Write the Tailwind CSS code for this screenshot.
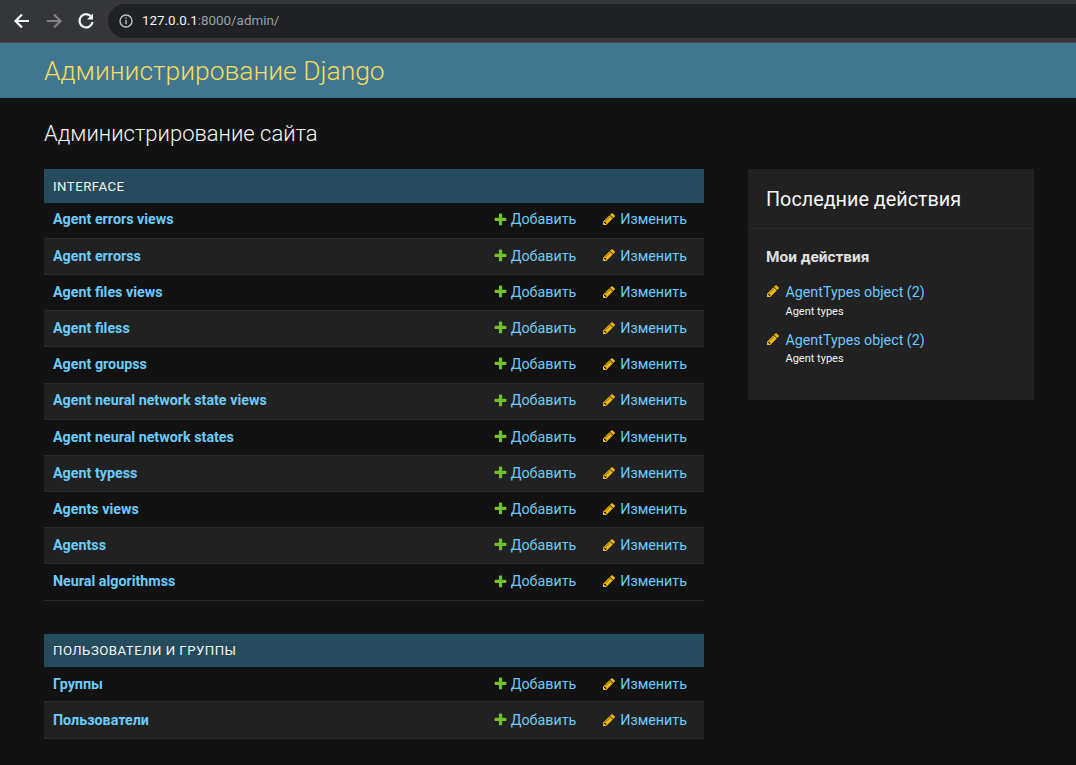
<!DOCTYPE html>
<html lang="ru">

<head>
    <meta charset="UTF-8">
    <script src="https://cdn.jsdelivr.net/npm/@tailwindcss/browser@4"></script>
    <title>Администрирование сайта</title>
</head>

<body class="bg-[#121212] font-['Roboto',sans-serif] w-[1076px] h-[765px] overflow-hidden">
    <!-- browser bar -->
    <div class="h-[43px] bg-[#35363a] flex items-center pl-[13px] border-b border-[#4a4b4f]">
        <svg class="w-[18px] h-[18px] mr-[14px]" viewBox="0 0 18 18" fill="none" stroke="#f1f3f4" stroke-width="2.2"><path d="M16 9H3M9 2.5 2.5 9 9 15.5" /></svg>
        <svg class="w-[18px] h-[18px] mr-[14px]" viewBox="0 0 18 18" fill="none" stroke="#808184" stroke-width="2.2"><path d="M2 9h13M9 2.5 15.5 9 9 15.5" /></svg>
        <svg class="w-[18px] h-[18px]" viewBox="0 0 18 18" fill="none" stroke="#f1f3f4" stroke-width="2.2"><path d="M14.5 5A6.6 6.6 0 1 0 15.6 10" /><path d="M16 1.5v6h-6z" fill="#f1f3f4" stroke="none" /></svg>
        <div class="ml-[13px] flex-1 h-[34px] bg-[#202124] rounded-l-full flex items-center pl-[11px] text-[13.4px]">
            <svg class="w-[14px] h-[14px] mr-[9px]" viewBox="0 0 14 14" fill="none" stroke="#bdc1c6" stroke-width="1.4"><circle cx="7" cy="7" r="6" /><path d="M7 6v4.2M7 3.4v1.4" /></svg>
            <span class="text-[#f1f3f4]">127.0.0.1</span><span class="text-[#9aa0a6]">:8000/admin/</span>
        </div>
    </div>

    <!-- django header -->
    <div class="h-[55px] bg-[#417690] px-[44px] pt-[2px] flex items-center">
        <h1 class="text-[26.4px] font-light text-[#f5dd5d]">Администрирование Django</h1>
    </div>

    <div class="pl-[44px] pt-[22px]">
        <h2 class="text-[22px] font-light text-[#f5f5f5] leading-[28px] mb-[21px]">Администрирование сайта</h2>

        <div class="flex items-start gap-[44px]">
            <div class="w-[660px] shrink-0">
                <div class="h-[33.6px] bg-[#264b5d] px-[9px] pt-[2px] flex items-center text-[13.2px] tracking-[0.5px] text-[#f5f5f5]">INTERFACE</div>
                <div id="interface"></div>

                <div class="mt-[33.2px] h-[33px] bg-[#264b5d] px-[9px] pt-[2px] flex items-center text-[13.2px] tracking-[0.5px] text-[#f5f5f5]">ПОЛЬЗОВАТЕЛИ И ГРУППЫ</div>
                <div id="auth"></div>
            </div>

            <!-- recent actions -->
            <div class="w-[286px] h-[231px] shrink-0 bg-[#212121]">
                <h2 class="h-[60px] px-[18px] pt-[2px] flex items-center text-[19.8px] text-[#f5f5f5] border-b border-[#2a2a2a]">Последние действия</h2>
                <h3 class="mt-[19px] px-[18px] text-[15.4px] font-bold leading-[19px] text-[#e0e0e0]">Мои действия</h3>
                <div class="mt-[16px] px-[18px] flex">
                    <svg class="w-[14px] h-[14px] mt-[1px] mr-[5.5px] shrink-0" viewBox="0 0 1792 1792" fill="#efb80b"><path d="M491 1536l91-91-235-235-91 91v107h128v128h107zm523-928q0-22-22-22-10 0-17 7l-542 542q-7 7-7 17 0 22 22 22 10 0 17-7l542-542q7-7 7-17zm-54-192l416 416-832 832h-416v-416zm683 96q0 53-37 90l-166 166-416-416 166-165q36-38 90-38 53 0 91 38l235 234q37 39 37 91z" /></svg>
                    <div>
                        <a class="block text-[14.25px] leading-[18px] text-[#6ccbfb]">AgentTypes object (2)</a>
                        <span class="block mt-[4px] text-[11px] leading-[14px] text-[#f5f5f5]">Agent types</span>
                    </div>
                </div>
                <div class="mt-[12px] px-[18px] flex">
                    <svg class="w-[14px] h-[14px] mt-[1px] mr-[5.5px] shrink-0" viewBox="0 0 1792 1792" fill="#efb80b"><path d="M491 1536l91-91-235-235-91 91v107h128v128h107zm523-928q0-22-22-22-10 0-17 7l-542 542q-7 7-7 17 0 22 22 22 10 0 17-7l542-542q7-7 7-17zm-54-192l416 416-832 832h-416v-416zm683 96q0 53-37 90l-166 166-416-416 166-165q36-38 90-38 53 0 91 38l235 234q37 39 37 91z" /></svg>
                    <div>
                        <a class="block text-[14.25px] leading-[18px] text-[#6ccbfb]">AgentTypes object (2)</a>
                        <span class="block mt-[3px] text-[11px] leading-[14px] text-[#f5f5f5]">Agent types</span>
                    </div>
                </div>
            </div>
        </div>
    </div>

    <script>
        const plus = '<svg class="w-[15px] h-[15px] mr-[2.5px] mb-[2px]" viewBox="0 0 1792 1792" fill="#70bf2b"><path d="M1600 796v192q0 40-28 68t-68 28h-416v416q0 40-28 68t-68 28h-192q-40 0-68-28t-28-68v-416h-416q-40 0-68-28t-28-68v-192q0-40 28-68t68-28h416v-416q0-40 28-68t68-28h192q40 0 68 28t28 68v416h416q40 0 68 28t28 68z" /></svg>';
        const pencil = '<svg class="w-[14px] h-[14px] mr-[4px] mb-[2px]" viewBox="0 0 1792 1792" fill="#efb80b"><path d="M491 1536l91-91-235-235-91 91v107h128v128h107zm523-928q0-22-22-22-10 0-17 7l-542 542q-7 7-7 17 0 22 22 22 10 0 17-7l542-542q7-7 7-17zm-54-192l416 416-832 832h-416v-416zm683 96q0 53-37 90l-166 166-416-416 166-165q36-38 90-38 53 0 91 38l235 234q37 39 37 91z" /></svg>';

        const row = (name, sizeClass, odd) => `
            <div class="${sizeClass} ${odd ? 'bg-[#212121]' : ''} border-b border-[#2a2a2a] flex items-center pl-[9px] pr-[17px] text-[14.3px]">
                <a class="flex-1 font-bold text-[#6ccbfb]">${name}</a>
                <a class="w-[109px] flex items-center text-[#6ccbfb]">${plus}Добавить</a>
                <a class="flex items-center text-[#6ccbfb]">${pencil}Изменить</a>
            </div>`;

        const models = ['Agent errors views', 'Agent errorss', 'Agent files views', 'Agent filess', 'Agent groupss',
            'Agent neural network state views', 'Agent neural network states', 'Agent typess', 'Agents views',
            'Agentss', 'Neural algorithmss'];

        document.getElementById('interface').innerHTML = models.map((m, i) => row(m, 'h-[36.2px]', i % 2 == 1)).join('');
        document.getElementById('auth').innerHTML = row('Группы', 'h-[35px] pt-[1.5px]', false) + row('Пользователи', 'h-[37.5px] pt-[1.5px]', true);
    </script>
</body>

</html>
